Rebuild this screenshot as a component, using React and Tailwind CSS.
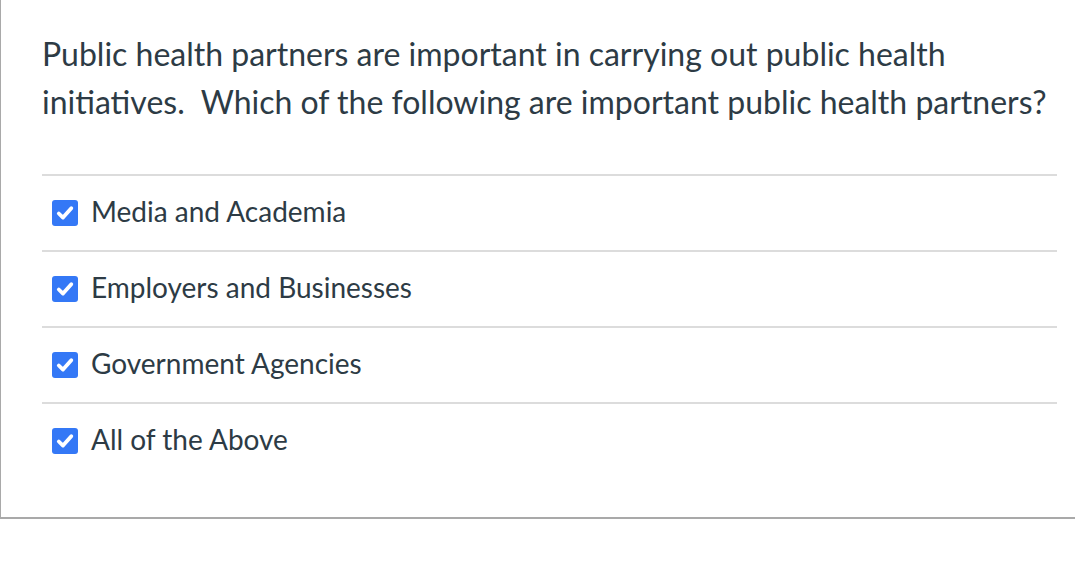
import React from 'react';

const options = [
  'Media and Academia',
  'Employers and Businesses',
  'Government Agencies',
  'All of the Above',
];

const CheckBox = () => (
  <span className="flex h-[26px] w-[26px] shrink-0 items-center justify-center rounded-[3px] bg-[#3478f6]">
    <svg width="20" height="20" viewBox="0 0 20 20" fill="none">
      <path d="M3.8 10.5 L8 14.6 L16.3 5.2" stroke="#fff" strokeWidth="3.8" strokeLinecap="round" strokeLinejoin="round" />
    </svg>
  </span>
);

const App = () => {
  return (
    <div className="h-[569px] w-[1075px] bg-white" style={{ fontFamily: 'Lato, "Open Sans", sans-serif' }}>
      <div className="border-l border-b-2 border-[#a9a9a9] pl-[41px] pr-[18px] pt-[30px] pb-[39px]">
        <p className="text-[32px] leading-[48px] text-[#2d3b45]">
          Public health partners are important in carrying out public health
          <br />
          initiatives.&nbsp; Which of the following are important public health partners?
        </p>

        <div className="mt-[48px]">
          {options.map((opt) => (
            <div key={opt} className="flex h-[76px] items-center gap-[13px] border-t-2 border-[#dcdcdc] pl-[10px]">
              <CheckBox />
              <span className="-mt-[4px] text-[28px] text-[#2d3b45]">{opt}</span>
            </div>
          ))}
        </div>
      </div>
    </div>
  );
};

export default App;
